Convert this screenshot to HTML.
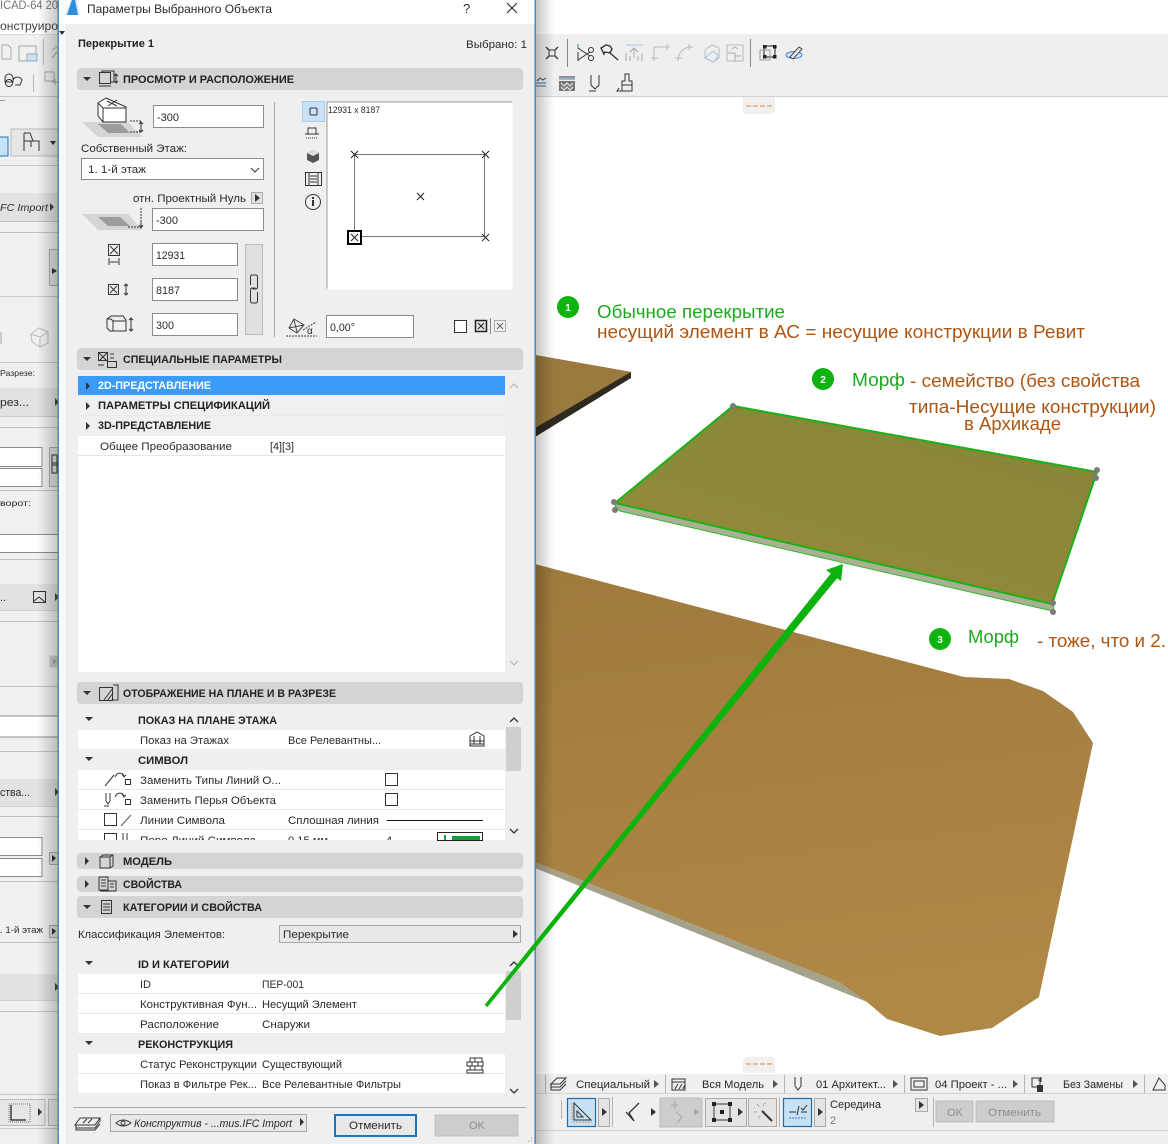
<!DOCTYPE html>
<html><head><meta charset="utf-8"><title>Параметры Выбранного Объекта</title>
<style>
html,body{margin:0;padding:0;background:#fff}
svg{display:block}
text{font-family:"Liberation Sans",sans-serif;font-size:11px;fill:#2a2a2a}
.b{font-weight:bold;fill:#222}
.w{fill:#fff;font-weight:bold}
.g{fill:#1fa81f;font-size:18px}
.o{fill:#ad5512;font-size:18px}
.i{fill:none;stroke:#333;stroke-width:1}
.l{fill:none;stroke:#9a9a9a;stroke-width:1}
.f{fill:#fff;stroke:#8c8c8c;stroke-width:1}
.tb{fill:#555;stroke:none}
</style></head><body>
<svg xmlns="http://www.w3.org/2000/svg" width="1168" height="1144" viewBox="0 0 1168 1144">
<defs>
<linearGradient id="sl" x1="0" x2="1" y1="0" y2="0"><stop offset="0" stop-color="#000" stop-opacity="0"/><stop offset="1" stop-color="#000" stop-opacity=".22"/></linearGradient>
<linearGradient id="sr" x1="0" x2="1" y1="0" y2="0"><stop offset="0" stop-color="#000" stop-opacity=".22"/><stop offset="1" stop-color="#000" stop-opacity="0"/></linearGradient>
<linearGradient id="bb" x1="0" x2="0.15" y1="0" y2="1"><stop offset="0" stop-color="#9e7a3c"/><stop offset="1" stop-color="#b08846"/></linearGradient>
<linearGradient id="pl" x1="0.9" x2="0.2" y1="0" y2="1"><stop offset="0" stop-color="#8a8238"/><stop offset="1" stop-color="#948c3a"/></linearGradient>
</defs>

<!-- viewport -->
<rect width="1168" height="1144" fill="#fff"/>
<polygon points="535,355 631,372 631,378 535,437" fill="#2e2a20"/>
<polygon points="535,355 631,372 535,428" fill="#9a7a3e"/>
<polygon points="535,862 535,868 867,1002 839,982" fill="#a5a28c"/>
<polygon points="535,564 964,677 1009,679 1043,691 1073,712 1093,743 1039,997 992,1028 940,1036 887,1019 867,1002 839,982 535,862" fill="url(#bb)"/>

<!-- morph plate -->
<polygon points="615,506 620,511 1048,610 1053,611 1054,603 616,502" fill="#a9b093" stroke="#33b833" stroke-width="1"/>
<polygon points="615,503 733,406 1097,472 1052,604" fill="url(#pl)" stroke="#19b319" stroke-width="2"/>
<path d="M622,502L737,411L1090,476" stroke="#6f9a34" stroke-width="1" fill="none"/>
<g fill="#7b7b7b"><circle cx="733" cy="406" r="3"/><circle cx="1097" cy="470" r="3"/><circle cx="1096" cy="478" r="3"/><circle cx="1053" cy="603" r="3"/><circle cx="1053" cy="612" r="3"/><circle cx="614" cy="502" r="3"/><circle cx="615" cy="510" r="3"/></g>

<!-- annotations -->
<circle cx="568" cy="307" r="11" fill="#0eb30e"/><text x="568" y="311" text-anchor="middle" style="fill:#fff;font-weight:bold;font-size:10px">1</text>
<circle cx="823" cy="379" r="11" fill="#0eb30e"/><text x="823" y="383" text-anchor="middle" style="fill:#fff;font-weight:bold;font-size:10px">2</text>
<circle cx="940" cy="639" r="11" fill="#0eb30e"/><text x="940" y="643" text-anchor="middle" style="fill:#fff;font-weight:bold;font-size:10px">3</text>
<text class="g" x="597" y="318" textLength="188" lengthAdjust="spacingAndGlyphs">Обычное перекрытие</text>
<text class="o" x="597" y="338" textLength="488" lengthAdjust="spacingAndGlyphs">несущий элемент в АС = несущие конструкции в Ревит</text>
<text class="g" x="852" y="386" textLength="53" lengthAdjust="spacingAndGlyphs">Морф</text>
<text class="o" x="910" y="387" textLength="230" lengthAdjust="spacingAndGlyphs">- семейство (без свойства</text>
<text class="o" x="909" y="413" textLength="247" lengthAdjust="spacingAndGlyphs">типа-Несущие конструкции)</text>
<text class="o" x="964" y="430" textLength="97" lengthAdjust="spacingAndGlyphs">в Архикаде</text>
<text class="g" x="968" y="643" textLength="51" lengthAdjust="spacingAndGlyphs">Морф</text>
<text class="o" x="1037" y="647" textLength="129" lengthAdjust="spacingAndGlyphs">- тоже, что и 2.</text>

<!-- top toolbar right -->
<rect x="535" y="34" width="633" height="62" fill="#efefef"/>
<rect x="535" y="96" width="633" height="1" fill="#d2d2d2"/>
<rect x="567" y="39" width="1" height="28" fill="#888"/><rect x="750" y="39" width="1" height="28" fill="#888"/>
<path d="M546,47l12,12M558,47l-12,12" stroke="#333" stroke-width="1.300" fill="none"/><rect x="549" y="50" width="6" height="6" fill="#efefef" stroke="#333"/>
<path d="M578,44v5" stroke="#3c7fc8" fill="none"/><path class="i" d="M578,52v9M578,48l12,8M578,60l12,-8"/><circle cx="591" cy="50" r="2.500" class="i"/><circle cx="591" cy="58" r="2.500" class="i"/>
<path d="M601,48l5,-3 4,1 2,3 -2,4 -5,-1 -1,2zM609,52l9,8" fill="none" stroke="#333" stroke-width="1.400"/>
<path d="M626,45h17" stroke="#a9c6e4"/><path d="M634,48v10M630,52l4,-4 4,4M630,61v-5M638,61v-5M642,61v-8M626,61v-8" fill="none" stroke="#aaa"/>
<path d="M654,61V47h13M651,58h7M667,44v6M670,47h-4" fill="none" stroke="#b8b8b8"/>
<path d="M678,61c0,-8 5,-13 12,-14M675,58h7M689,44v6M693,47h-5" fill="none" stroke="#b8b8b8"/>
<path d="M705,50l7,-5 7,3v4M705,50v8l8,4 6,-4v-6" fill="none" stroke="#bbb"/><path d="M705,58l8,-7 6,5 -6,6z" fill="none" stroke="#a8c4e4"/>
<rect x="727" y="45" width="16" height="16" fill="none" stroke="#b8b8b8"/><path d="M735,53h-8M735,53v8M732,49l3,-2 3,2M735,56h6" fill="none" stroke="#aaa"/>
<rect x="764" y="46" width="11" height="11" fill="none" stroke="#222"/><g fill="#222"><rect x="763" y="45" width="3.500" height="3.500"/><rect x="773" y="45" width="3.500" height="3.500"/><rect x="763" y="55" width="3.500" height="3.500"/><rect x="773" y="55" width="3.500" height="3.500"/></g><rect x="760" y="50" width="10" height="10" fill="none" stroke="#999"/>
<ellipse cx="794" cy="55" rx="8" ry="3.500" fill="#d0e2f4" stroke="#3c7fc8"/><path d="M790,57l9,-10 3,2 -9,10z" fill="#efefef" stroke="#444"/>
<path d="M536,83h10M536,86h10" stroke="#3c6fb0"/><path d="M537,81l3,-3 3,2 3,-2" stroke="#444" fill="none"/>
<rect x="559" y="81" width="16" height="10" fill="#777"/><path d="M559,77h16" stroke="#333"/><path d="M559,79h16" stroke="#4a78b0"/><path d="M561,83l3,3 3,-3 3,3 3,-3M561,87l3,3 3,-3 3,3 3,-3" stroke="#eee" fill="none"/>
<path class="i" d="M591,75v10l4,4 4,-4V75M589,91h7"/>
<path class="i" d="M625,74h4v7h3v4h-10v-4h3zM622,85v6h10v-6M622,91h-5l2,-3"/>
<path d="M743,97h32v13q0,4 -4,4h-24q-4,0 -4,-4z" fill="#f0f0f0"/><path d="M746,106h5M753,106h5M760,106h5M767,106h5" stroke="#e08a3c"/>
<path d="M743,1073v-12q0,-4 4,-4h24q4,0 4,4v12z" fill="#f0f0f0"/><path d="M746,1064h5M753,1064h5M760,1064h5M767,1064h5" stroke="#e08a3c"/>

<!-- bottom toolbar right -->
<rect x="535" y="1074" width="633" height="70" fill="#efefef"/>
<rect x="535" y="1093" width="633" height="1" fill="#d4d4d4"/><rect x="535" y="1130" width="633" height="1" fill="#d4d4d4"/>
<g fill="#b5b5b5"><rect x="545" y="1075" width="1" height="18"/><rect x="665" y="1075" width="1" height="18"/><rect x="784" y="1075" width="1" height="18"/><rect x="904" y="1075" width="1" height="18"/><rect x="1024" y="1075" width="1" height="18"/><rect x="1144" y="1075" width="1" height="18"/><rect x="612" y="1097" width="1" height="30"/><rect x="779" y="1097" width="1" height="30"/><rect x="933" y="1097" width="1" height="30"/><rect x="561" y="1100" width="1" height="19"/></g>
<text x="576" y="1088" textLength="74" lengthAdjust="spacingAndGlyphs">Специальный</text>
<text x="702" y="1088" textLength="62" lengthAdjust="spacingAndGlyphs">Вся Модель</text>
<text x="816" y="1088" textLength="70" lengthAdjust="spacingAndGlyphs">01 Архитект...</text>
<text x="935" y="1088" textLength="72" lengthAdjust="spacingAndGlyphs">04 Проект - ...</text>
<text x="1063" y="1088" textLength="60" lengthAdjust="spacingAndGlyphs">Без Замены</text>
<g class="tb"><polygon points="654,1080 659,1084 654,1088"/><polygon points="773,1080 778,1084 773,1088"/><polygon points="893,1080 898,1084 893,1088"/><polygon points="1013,1080 1018,1084 1013,1088"/><polygon points="1133,1080 1138,1084 1133,1088"/></g>
<path class="i" d="M551,1084l6,-6h9l-6,6zM551,1084v3h9l6,-6M551,1087v3h9l6,-6"/>
<rect x="672" y="1079" width="13" height="11" class="i"/><path class="i" d="M672,1082h13M675,1089l3,-5M679,1089l3,-5M683,1089l2,-4"/>
<path class="i" d="M795,1077v9l3,4 3,-4v-9"/>
<rect x="911" y="1078" width="16" height="12" class="i"/><rect x="914" y="1081" width="10" height="6" class="i"/>
<rect x="1032" y="1078" width="8" height="9" class="i"/><rect x="1037" y="1085" width="6" height="7" fill="#333"/><path class="i" d="M1041,1080h-3M1041,1077v5"/>
<path class="i" d="M1153,1090l6,-12 6,7v5z"/>

<rect x="567.500" y="1098.500" width="28" height="28" fill="#c7e1f7" stroke="#1f6fb0" stroke-width="1.200"/>
<path class="i" d="M574,1103v17h17zM577,1111v6h6z"/><path d="M573,1122h19M572,1103v19" stroke="#e08a3c" stroke-dasharray="2 1" fill="none"/>
<rect x="598.500" y="1098.500" width="11" height="28" fill="#e4e4e4" stroke="#aaa"/><polygon points="602,1108 607,1112 602,1116" fill="#333"/>
<path d="M626,1112l8,9M634,1121l-5,-8 10,-10" fill="none" stroke="#333" stroke-width="1.300"/><polygon points="651,1108 656,1112 651,1116" fill="#333"/>
<rect x="660" y="1098" width="42" height="29" fill="#cdcdcd" stroke="#bbb"/><path d="M671,1105h7M675,1101v8M676,1112l6,5 -5,6" fill="none" stroke="#a8a8a8"/><polygon points="694,1108 699,1112 694,1116" fill="#aaa"/>
<rect x="705.500" y="1098.500" width="41" height="28" fill="#e4e4e4" stroke="#aaa"/><rect x="714" y="1104" width="16" height="16" class="i"/><g fill="#222"><rect x="712" y="1102" width="4" height="4"/><rect x="728" y="1102" width="4" height="4"/><rect x="712" y="1118" width="4" height="4"/><rect x="728" y="1118" width="4" height="4"/></g><rect x="720" y="1110" width="4" height="4" fill="#222"/><polygon points="738,1108 743,1112 738,1116" fill="#333"/>
<rect x="748.500" y="1098.500" width="28" height="28" fill="#e4e4e4" stroke="#aaa"/><path d="M762,1111l10,10" stroke="#333" stroke-width="2"/><path d="M757,1104l3,3M765,1103l-2,3M754,1112h4M764,1112h2M758,1118l3,-3" stroke="#777" stroke-dasharray="1 1"/>
<rect x="783.500" y="1098.500" width="28" height="28" fill="#c7e1f7" stroke="#1f6fb0" stroke-width="1.200"/>
<path class="i" d="M789,1112h7M801,1112h6M799,1106l-2,9M801,1108l2,2 4,-5"/><path d="M789,1118h18" stroke="#3c7fc8" stroke-dasharray="2 1"/>
<rect x="814.500" y="1098.500" width="11" height="28" fill="#e4e4e4" stroke="#aaa"/><polygon points="818,1108 823,1112 818,1116" fill="#333"/>
<text x="830" y="1108" textLength="51" lengthAdjust="spacingAndGlyphs">Середина</text><text x="830" y="1124" style="fill:#777">2</text>
<rect x="915.500" y="1098.500" width="12" height="13" fill="#e4e4e4" stroke="#aaa"/><polygon points="919,1101 924,1105 919,1109" fill="#333"/>
<rect x="936" y="1101" width="37" height="21" fill="#cdcdcd" stroke="#bdbdbd"/><text x="947" y="1116" style="fill:#8e8e8e">OK</text>
<rect x="976" y="1101" width="78" height="21" fill="#cdcdcd" stroke="#bdbdbd"/><text x="988" y="1116" textLength="53" lengthAdjust="spacingAndGlyphs" style="fill:#8e8e8e">Отменить</text>

<!-- left panel behind dialog -->
<rect x="0" y="34" width="58" height="1110" fill="#f0f0f0"/>
<rect x="0" y="0" width="58" height="35" fill="#fff"/>
<text x="0" y="9" style="fill:#777;font-size:12px" textLength="58" lengthAdjust="spacingAndGlyphs">ICAD-64 20</text>
<text x="0" y="30" style="fill:#444;font-size:12px" textLength="58" lengthAdjust="spacingAndGlyphs">онструиро</text>
<rect x="0" y="34" width="58" height="1" fill="#ddd"/><rect x="43" y="39" width="1" height="26" fill="#bbb"/><rect x="33" y="74" width="1" height="18" fill="#bbb"/>
<path d="M2,45h6l3,3v11H2z" fill="none" stroke="#aaa"/><rect x="19" y="46" width="17" height="15" fill="none" stroke="#9aa"/><rect x="27" y="54" width="10" height="7" fill="#cfe0f2" stroke="#8ab"/><path d="M52,50l5,-3M52,58l5,-6" stroke="#aaa"/>
<path class="i" d="M5,78a4,4 0 0 1 8,0v4h-8zM13,80a5,5 0 0 1 9,0l-2,5h-5"/><circle cx="9" cy="83" r="3.500" class="i"/><rect x="45" y="72" width="9" height="9" fill="none" stroke="#aaa"/><path d="M52,82h6M55,79v6" stroke="#aaa"/>
<rect x="0" y="96" width="58" height="1" fill="#c8c8c8"/><rect x="0" y="100" width="5" height="1" fill="#999"/>
<rect x="-1" y="137" width="9" height="19" fill="#c7e1f7" stroke="#1f6fb0"/>
<rect x="11" y="129" width="47" height="27" fill="#e6e6e6" stroke="#bbb"/><path d="M24,133h6l3,8H39v10M24,133v18M24,141h15M31,141v6" fill="none" stroke="#333" stroke-width="1"/><polygon points="50,141 56,141 53,145" fill="#333"/>
<rect x="0" y="165" width="58" height="1" fill="#c8c8c8"/>
<rect x="0" y="193" width="58" height="28" fill="#e2e2e2"/><rect x="0" y="221" width="58" height="1" fill="#c0c0c0"/><rect x="0" y="232" width="58" height="1" fill="#c0c0c0"/>
<text x="0" y="211" style="font-style:italic;font-size:10.500px" textLength="48" lengthAdjust="spacingAndGlyphs">FC Import</text><polygon points="50,203 54,207 50,211" fill="#444"/>
<rect x="49.500" y="249.500" width="9" height="36" fill="#e0e0e0" stroke="#aaa"/><polygon points="52,268 52,274 57,271" fill="#333"/>
<rect x="0" y="296" width="58" height="1" fill="#c8c8c8"/>
<path d="M31,334l8,-6 9,4v11l-8,4 -8,-5zM31,334l9,3 8,-5M40,337v10" fill="none" stroke="#bbb"/><rect x="0" y="332" width="2" height="12" fill="#ccc"/>
<rect x="0" y="362" width="58" height="1" fill="#c8c8c8"/>
<text x="0" y="376" style="font-size:8.500px" textLength="35" lengthAdjust="spacingAndGlyphs">Разрезе:</text>
<rect x="0" y="388" width="58" height="28" fill="#e2e2e2"/><rect x="0" y="416" width="58" height="1" fill="#c8c8c8"/><rect x="0" y="427" width="58" height="1" fill="#c0c0c0"/>
<text x="0" y="406" textLength="29" lengthAdjust="spacingAndGlyphs">рез...</text><polygon points="55,398 55,406 59,402" fill="#444"/>
<rect x="-1" y="447.500" width="43" height="19" class="f"/><rect x="-1" y="468.500" width="43" height="18" class="f"/>
<rect x="49.500" y="447.500" width="9" height="39" fill="#e0e0e0" stroke="#aaa"/><rect x="52" y="455" width="5" height="10" class="i"/><rect x="52" y="463" width="5" height="10" class="i"/>
<rect x="0" y="490" width="58" height="1" fill="#c0c0c0"/>
<text x="0" y="506" style="font-size:8.500px" textLength="31" lengthAdjust="spacingAndGlyphs">ворот:</text>
<rect x="-1" y="534.500" width="60" height="18" class="f"/><rect x="0" y="559" width="58" height="1" fill="#c0c0c0"/>
<rect x="0" y="584" width="58" height="26" fill="#e2e2e2"/><rect x="0" y="610" width="58" height="1" fill="#d0d0d0"/><rect x="0" y="621" width="58" height="1" fill="#c0c0c0"/>
<text x="0" y="601">..</text><rect x="33.500" y="591.500" width="12" height="11" class="i"/><path class="i" d="M34,601l5,-4 6,5"/><polygon points="55,593 55,601 59,597" fill="#444"/>
<rect x="49.500" y="655.500" width="9" height="12" fill="#ccc"/><polygon points="53,658 53,665 57,661" fill="#aaa"/>
<rect x="0" y="686" width="58" height="1" fill="#c0c0c0"/>
<rect x="-1" y="716" width="60" height="21" class="f"/><rect x="0" y="751" width="58" height="1" fill="#c0c0c0"/>
<rect x="0" y="779" width="58" height="27" fill="#e2e2e2"/><rect x="0" y="806" width="58" height="1" fill="#d0d0d0"/><rect x="0" y="816" width="58" height="1" fill="#c0c0c0"/>
<text x="0" y="796" textLength="30" lengthAdjust="spacingAndGlyphs">ства...</text><polygon points="55,788 55,796 59,792" fill="#444"/>
<rect x="-1" y="837.500" width="43" height="18" class="f"/><rect x="-1" y="858.500" width="43" height="18" class="f"/>
<rect x="49.500" y="852.500" width="9" height="12" fill="#e0e0e0" stroke="#aaa"/><polygon points="52,855 52,862 56,858" fill="#333"/>
<rect x="0" y="881" width="58" height="1" fill="#c0c0c0"/>
<text x="0" y="933" style="font-size:9px" textLength="43" lengthAdjust="spacingAndGlyphs">. 1-й этаж</text>
<rect x="49.500" y="925.500" width="9" height="12" fill="#e0e0e0" stroke="#aaa"/><polygon points="52,928 52,935 56,931" fill="#333"/>
<rect x="0" y="942" width="58" height="1" fill="#c0c0c0"/>
<rect x="0" y="974" width="58" height="26" fill="#e2e2e2"/><rect x="0" y="1000" width="58" height="1" fill="#d0d0d0"/><rect x="0" y="1011" width="58" height="1" fill="#c0c0c0"/>
<polygon points="55,983 55,991 59,987" fill="#444"/>
<rect x="0" y="1094" width="58" height="1" fill="#c8c8c8"/>
<rect x="-1" y="1099.500" width="46" height="26" fill="#e6e6e6" stroke="#bbb"/><rect x="48.500" y="1099.500" width="11" height="26" fill="#e6e6e6" stroke="#bbb"/>
<rect x="9" y="1104" width="21" height="18" fill="none" stroke="#777" stroke-dasharray="1 1"/><path d="M11,1105v15h15" fill="none" stroke="#222" stroke-width="1.300"/><polygon points="38,1108 38,1116 42,1112" fill="#333"/>
<rect x="0" y="1128" width="58" height="1" fill="#c8c8c8"/>

<!-- dialog shadows -->
<rect x="38" y="0" width="20" height="1144" fill="url(#sl)"/>
<rect x="536" y="0" width="18" height="1144" fill="url(#sr)"/>

<!-- dialog -->
<rect x="58" y="0" width="478" height="1144" fill="#efefef"/>
<rect x="58" y="0" width="478" height="24" fill="#fff"/>
<rect x="58.500" y="24" width="7" height="1120" fill="#f8fbfd"/>
<rect x="57.500" y="0" width="1.500" height="1144" fill="#4a8ac0"/>
<rect x="534.500" y="0" width="1.500" height="1144" fill="#4a8ac0"/>
<polygon points="65,15 71,0 77,0 80,15" fill="#d9e8f5"/><polygon points="67,15 72,0 75,0 78,15" fill="#2f8de0"/>
<text x="87" y="13" style="font-size:12px" textLength="185" lengthAdjust="spacingAndGlyphs">Параметры Выбранного Объекта</text>
<text x="463" y="13" style="font-size:13px">?</text>
<path d="M507,3l10,10M517,3l-10,10" stroke="#222" fill="none"/>
<polygon points="59,31 65,31 62,35" fill="#333"/>
<text class="b" x="78" y="47" textLength="76" lengthAdjust="spacingAndGlyphs">Перекрытие 1</text>
<text x="466" y="48" textLength="61" lengthAdjust="spacingAndGlyphs">Выбрано: 1</text>

<!-- section headers -->
<g fill="#d4d4d4"><rect x="77" y="68" width="446" height="22" rx="4"/><rect x="77" y="348" width="446" height="22" rx="4"/><rect x="77" y="682" width="446" height="22" rx="4"/><rect x="77" y="853" width="446" height="16" rx="4"/><rect x="77" y="876" width="446" height="16" rx="4"/><rect x="77" y="896" width="446" height="22" rx="4"/></g>
<g fill="#333"><polygon points="83,77 91,77 87,81"/><polygon points="83,357 91,357 87,361"/><polygon points="83,691 91,691 87,695"/><polygon points="85,857 85,865 89,861"/><polygon points="85,880 85,888 89,884"/><polygon points="83,905 91,905 87,909"/></g>
<text class="b" x="123" y="83" textLength="171" lengthAdjust="spacingAndGlyphs">ПРОСМОТР И РАСПОЛОЖЕНИЕ</text>
<text class="b" x="123" y="363" textLength="159" lengthAdjust="spacingAndGlyphs">СПЕЦИАЛЬНЫЕ ПАРАМЕТРЫ</text>
<text class="b" x="123" y="697" textLength="213" lengthAdjust="spacingAndGlyphs">ОТОБРАЖЕНИЕ НА ПЛАНЕ И В РАЗРЕЗЕ</text>
<text class="b" x="123" y="865" textLength="49" lengthAdjust="spacingAndGlyphs">МОДЕЛЬ</text>
<text class="b" x="123" y="888" textLength="59" lengthAdjust="spacingAndGlyphs">СВОЙСТВА</text>
<text class="b" x="123" y="911" textLength="139" lengthAdjust="spacingAndGlyphs">КАТЕГОРИИ И СВОЙСТВА</text>
<rect x="99.500" y="72.500" width="11" height="11" class="i"/><path class="i" d="M102,72v-1h12v11h-3M99,86h12M116,74v9M114,76l2,-2 2,2M114,81l2,2 2,-2"/>
<rect x="98.500" y="352.500" width="9" height="8" class="i"/><path class="i" d="M99,353l8,8M107,353l-8,8M110,354h4M110,358h4M98,365h6"/><rect x="107.500" y="361.500" width="9" height="6" class="i"/>
<rect x="99.500" y="687.500" width="13" height="13" class="i"/><path class="i" d="M104,700l9,-12M108,700l5,-7M113,685h5v15h-5"/>
<path class="i" d="M100,857l3,-2h10v11l-3,2H100zM100,857h10v11M110,857l3,-2"/>
<rect x="99" y="877" width="9" height="13" class="i"/><path class="i" d="M108,881h8v10h-16M101,880h5M101,883h5M101,886h5M110,884h4M110,887h4"/>
<rect x="101.500" y="900.500" width="10" height="13" class="i"/><path class="i" d="M103,904h7M103,907h7M103,910h7"/>

<!-- preview section left -->
<polygon points="82,122 128,122 143,137 98,137" fill="#d5d5d5"/><polygon points="98,124 121,124 130,133 108,133" fill="#9c9c9c"/>
<path d="M98,103l8,-5 20,9v15H103l-5,-6z" fill="#fff"/><path class="i" d="M98,103l5,5h23M103,108v14M98,103v13l5,6h23v-15l-20,-9zM107,101l10,5M117,100l-9,6"/>
<path d="M130,121h11M130,132h11" stroke="#333" stroke-dasharray="2 1" fill="none"/><path d="M141,122v10M139,124l2,-2 2,2M139,130l2,2 2,-2" class="i"/>
<rect x="153.500" y="105.500" width="110" height="22" class="f"/><text x="157" y="121" textLength="22" lengthAdjust="spacingAndGlyphs">-300</text>
<text x="81" y="152" textLength="106" lengthAdjust="spacingAndGlyphs">Собственный Этаж:</text>
<rect x="81.500" y="158.500" width="182" height="21" class="f"/><text x="88" y="173" textLength="58" lengthAdjust="spacingAndGlyphs">1. 1-й этаж</text><path class="i" d="M251,168l4,4 4,-4"/>
<text x="133" y="202" textLength="113" lengthAdjust="spacingAndGlyphs">отн. Проектный Нуль</text>
<rect x="251.500" y="192.500" width="11" height="11" fill="#e2e2e2" stroke="#aaa"/><polygon points="255,194 255,202 260,198" fill="#333"/>
<polygon points="82,214 128,214 142,230 98,230" fill="#d5d5d5"/><polygon points="98,217 120,217 130,226 108,226" fill="#9c9c9c"/>
<path d="M141,208v14" stroke="#333" stroke-dasharray="2 1"/><path class="i" d="M141,220v8M139,225l2,3 2,-3"/><path d="M128,227h13" stroke="#333" stroke-dasharray="2 1"/>
<rect x="152.500" y="208.500" width="111" height="22" class="f"/><text x="156" y="224" textLength="22" lengthAdjust="spacingAndGlyphs">-300</text>
<rect x="108.500" y="244.500" width="11" height="11" class="i"/><path class="i" d="M110,246l8,8M118,246l-8,8M109,258v7M119,258v7M110,262h8"/>
<rect x="152.500" y="243.500" width="85" height="22" class="f"/><text x="156" y="259" textLength="29" lengthAdjust="spacingAndGlyphs">12931</text>
<rect x="108.500" y="284.500" width="10" height="10" class="i"/><path class="i" d="M110,286l7,7M117,286l-7,7M126,284v11M124,286l2,-2 2,2M124,293l2,2 2,-2"/>
<rect x="152.500" y="278.500" width="85" height="22" class="f"/><text x="156" y="294" textLength="24" lengthAdjust="spacingAndGlyphs">8187</text>
<path class="i" d="M107,319l4,-3h12l3,4v11h-16l-3,-3zM107,319h4l2,2h13M113,321v10M131,318v13M129,320l2,-2 2,2M129,329l2,2 2,-2"/>
<rect x="152.500" y="313.500" width="85" height="22" class="f"/><text x="156" y="329" textLength="18" lengthAdjust="spacingAndGlyphs">300</text>
<rect x="245.500" y="244.500" width="17" height="90" fill="#e0e0e0" stroke="#bbb"/>
<path class="i" d="M250.500,285v-8q0,-2 2,-2h3q2,0 2,2v10q0,2 -2,2h-3M257.500,292v9q0,2 -2,2h-3q-2,0 -2,-2v-11q0,-2 2,-2h3"/>
<rect x="274" y="102" width="1" height="235" fill="#aaa"/>
<rect x="302.500" y="101.500" width="22" height="20" fill="#c9e1f6" stroke="#a8cbe8"/><rect x="310" y="108" width="7" height="7" rx="1" class="i"/>
<path class="i" d="M308,134v-6h8v6M305,134h14" /><path d="M306,138h12" stroke="#333" stroke-dasharray="1 1"/>
<polygon points="313,150 319,153 319,160 313,163 307,160 307,153" fill="#555"/><polygon points="313,150 319,153 313,156 307,153" fill="#ddd"/>
<rect x="305.500" y="172.500" width="16" height="13" class="i"/><path class="i" d="M309,172v13M318,172v13M310,176h7M310,179h7M310,182h7"/>
<circle cx="313" cy="202" r="7.500" class="i"/><rect x="312" y="200" width="2" height="6" fill="#333"/><rect x="312" y="197" width="2" height="2" fill="#333"/>
<rect x="327" y="102" width="185" height="187" fill="#fff" stroke="#999"/><path d="M327,289h185V102" stroke="#fff" fill="none"/>
<text x="328" y="113" style="font-size:9px" textLength="52" lengthAdjust="spacingAndGlyphs">12931 x 8187</text>
<rect x="354.500" y="154.500" width="130" height="82" fill="none" stroke="#777"/>
<g stroke="#222" fill="none"><path d="M351,151l7,7M358,151l-7,7M482,151l7,7M489,151l-7,7M482,234l7,7M489,234l-7,7M417,193l7,7M424,193l-7,7"/></g>
<rect x="348" y="231" width="13" height="13" fill="#fff" stroke="#000" stroke-width="2"/><path d="M351,234l7,7M358,234l-7,7" stroke="#222"/>
<path d="M294,319l10,6 -7,8 -8,-5zM294,320l3,12M304,325l-15,3" fill="none" stroke="#444"/><path d="M286,336h31M303,330l13,-8" stroke="#444" stroke-dasharray="2 1" fill="none"/><text x="307" y="334" style="font-size:10px">α</text>
<rect x="326.500" y="315.500" width="87" height="22" class="f"/><text x="330" y="331" textLength="25" lengthAdjust="spacingAndGlyphs">0,00°</text>
<rect x="454.500" y="320.500" width="12" height="12" class="f" style="stroke:#333"/>
<rect x="475.500" y="320.500" width="11" height="11" fill="#e2e2e2" stroke="#222" stroke-width="1.500"/><path d="M478,323l6,6M484,323l-6,6" stroke="#222"/>
<rect x="490" y="318" width="1" height="16" fill="#888"/>
<rect x="494.500" y="320.500" width="11" height="11" fill="none" stroke="#666" stroke-dasharray="1 1"/><path d="M497,323l6,6M503,323l-6,6" stroke="#666"/>

<!-- special params list -->
<rect x="78" y="376" width="427" height="296" fill="#fff"/>
<rect x="78" y="376" width="427" height="19" fill="#3b9bf8"/>
<rect x="78" y="395" width="427" height="41" fill="#f0f0f0"/><rect x="78" y="415" width="427" height="1" fill="#eaeaea"/>
<rect x="78" y="455" width="427" height="1" fill="#e6e6e6"/>
<g fill="#333"><polygon points="86,382 86,390 90,386"/><polygon points="86,402 86,410 90,406"/><polygon points="86,422 86,430 90,426"/></g>
<text class="w" x="98" y="389" textLength="113" lengthAdjust="spacingAndGlyphs">2D-ПРЕДСТАВЛЕНИЕ</text>
<text class="b" x="98" y="409" textLength="172" lengthAdjust="spacingAndGlyphs">ПАРАМЕТРЫ СПЕЦИФИКАЦИЙ</text>
<text class="b" x="98" y="429" textLength="113" lengthAdjust="spacingAndGlyphs">3D-ПРЕДСТАВЛЕНИЕ</text>
<text x="100" y="450" textLength="132" lengthAdjust="spacingAndGlyphs">Общее Преобразование</text>
<text x="270" y="450" textLength="24" lengthAdjust="spacingAndGlyphs">[4][3]</text>
<path d="M510,388l4,-4 4,4M510,661l4,4 4,-4" stroke="#bbb" stroke-width="1.300" fill="none"/>

<!-- display list -->
<rect x="78" y="710" width="427" height="130" fill="#fff"/>
<rect x="78" y="710" width="427" height="20" fill="#efefef"/><rect x="78" y="749" width="427" height="21" fill="#efefef"/>
<rect x="78" y="789" width="427" height="1" fill="#e6e6e6"/><rect x="78" y="809" width="427" height="1" fill="#e6e6e6"/><rect x="78" y="829" width="427" height="1" fill="#e6e6e6"/>
<rect x="506" y="727" width="15" height="44" fill="#cfcfcf"/>
<path d="M510,722l4,-4 4,4M510,829l4,4 4,-4" stroke="#333" stroke-width="1.300" fill="none"/>
<g fill="#333"><polygon points="85,717 93,717 89,721"/><polygon points="85,757 93,757 89,761"/></g>
<text class="b" x="138" y="724" textLength="139" lengthAdjust="spacingAndGlyphs">ПОКАЗ НА ПЛАНЕ ЭТАЖА</text>
<text x="140" y="744" textLength="89" lengthAdjust="spacingAndGlyphs">Показ на Этажах</text>
<text x="288" y="744" textLength="93" lengthAdjust="spacingAndGlyphs">Все Релевантны...</text>
<path class="i" d="M470,736l7,-4 7,4v10h-14zM470,741h14M470,744h14M474,736v8M480,736v8"/>
<text class="b" x="138" y="764" textLength="50" lengthAdjust="spacingAndGlyphs">СИМВОЛ</text>
<path class="i" d="M105,786l9,-11M115,777c2,-5 7,-5 9,-1"/><rect x="125.500" y="779.500" width="5" height="5" class="i"/><path class="i" d="M122,774l2,3 2,-2"/>
<text x="140" y="784" textLength="141" lengthAdjust="spacingAndGlyphs">Заменить Типы Линий О...</text>
<rect x="385.500" y="773.500" width="12" height="12" class="f" style="stroke:#333"/>
<path class="i" d="M106,793v8l2,3 2,-3v-8M104,806h5M115,797c2,-5 7,-5 9,-1M122,794l2,3 2,-2"/><rect x="125.500" y="799.500" width="5" height="5" class="i"/>
<text x="140" y="804" textLength="136" lengthAdjust="spacingAndGlyphs">Заменить Перья Объекта</text>
<rect x="385.500" y="793.500" width="12" height="12" class="f" style="stroke:#333"/>
<rect x="104.500" y="813.500" width="12" height="12" class="f" style="stroke:#333"/><path d="M121,826l10,-11" stroke="#555"/>
<text x="140" y="824" textLength="85" lengthAdjust="spacingAndGlyphs">Линии Символа</text>
<text x="288" y="824" textLength="91" lengthAdjust="spacingAndGlyphs">Сплошная линия</text>
<rect x="387" y="820" width="96" height="1" fill="#111"/>
<rect x="437.500" y="832.500" width="45" height="8" fill="#fff" stroke="#222"/><rect x="452" y="836" width="28" height="4" fill="#12a03c"/><rect x="444" y="835" width="2" height="5" fill="#12a03c"/>
<svg x="78" y="830" width="427" height="10" viewBox="78 830 427 10"><rect x="104.500" y="833.500" width="12" height="12" class="f" style="stroke:#333"/><path d="M123,833v10M127,833v10" stroke="#333"/><text x="140" y="844" textLength="116" lengthAdjust="spacingAndGlyphs">Перо Линий Символа</text><text x="288" y="844" textLength="40" lengthAdjust="spacingAndGlyphs">0,15 мм</text><text x="386" y="844">4</text></svg>

<!-- categories -->
<text x="78" y="938" textLength="147" lengthAdjust="spacingAndGlyphs">Классификация Элементов:</text>
<rect x="279.500" y="925.500" width="241" height="17" fill="#e8e8e8" stroke="#a8a8a8"/><text x="283" y="938" textLength="66" lengthAdjust="spacingAndGlyphs">Перекрытие</text><polygon points="513,930 513,938 518,934" fill="#333"/>
<rect x="78" y="954" width="427" height="140" fill="#fff"/>
<rect x="78" y="954" width="427" height="20" fill="#efefef"/><rect x="78" y="1033" width="427" height="21" fill="#efefef"/>
<rect x="78" y="993" width="427" height="1" fill="#e6e6e6"/><rect x="78" y="1013" width="427" height="1" fill="#e6e6e6"/><rect x="78" y="1073" width="427" height="1" fill="#e6e6e6"/><rect x="78" y="1093" width="427" height="5" fill="#efefef"/>
<rect x="506" y="971" width="15" height="49" fill="#cfcfcf"/>
<path d="M510,966l4,-4 4,4M510,1089l4,4 4,-4" stroke="#333" stroke-width="1.300" fill="none"/>
<g fill="#333"><polygon points="85,961 93,961 89,965"/><polygon points="85,1041 93,1041 89,1045"/></g>
<text class="b" x="138" y="968" textLength="91" lengthAdjust="spacingAndGlyphs">ID И КАТЕГОРИИ</text>
<text x="140" y="988">ID</text><text x="262" y="988" textLength="42" lengthAdjust="spacingAndGlyphs">ПЕР-001</text>
<text x="140" y="1008" textLength="117" lengthAdjust="spacingAndGlyphs">Конструктивная Фун...</text><text x="262" y="1008" textLength="95" lengthAdjust="spacingAndGlyphs">Несущий Элемент</text>
<text x="140" y="1028" textLength="79" lengthAdjust="spacingAndGlyphs">Расположение</text><text x="262" y="1028" textLength="48" lengthAdjust="spacingAndGlyphs">Снаружи</text>
<text class="b" x="138" y="1048" textLength="95" lengthAdjust="spacingAndGlyphs">РЕКОНСТРУКЦИЯ</text>
<text x="140" y="1068" textLength="117" lengthAdjust="spacingAndGlyphs">Статус Реконструкции</text><text x="262" y="1068" textLength="80" lengthAdjust="spacingAndGlyphs">Существующий</text>
<path class="i" d="M470,1058h12v4h-12zM467,1062h16v4h-16zM470,1066h12v4h-12zM467,1070h16v3h-16zM475,1058v4M472,1062v4M478,1062v4M475,1066v4"/>
<text x="140" y="1088" textLength="117" lengthAdjust="spacingAndGlyphs">Показ в Фильтре Рек...</text><text x="262" y="1088" textLength="139" lengthAdjust="spacingAndGlyphs">Все Релевантные Фильтры</text>

<!-- dialog footer -->
<rect x="73" y="1107" width="453" height="1" fill="#aaa"/>
<path class="i" d="M80,1118h20l-5,7H75zM76,1125v3h19l5,-7v-3M76,1128v2h19l5,-6M83,1123l4,-4M88,1123l4,-4"/>
<rect x="110.500" y="1114.500" width="196" height="17" fill="#e8e8e8" stroke="#a8a8a8"/>
<path class="i" d="M116,1123q7,-6 15,0q-8,6 -15,0z"/><circle cx="123" cy="1123" r="2" class="i"/>
<text x="134" y="1127" style="font-style:italic" textLength="158" lengthAdjust="spacingAndGlyphs">Конструктив - ...mus.IFC Import</text><polygon points="300,1118 300,1126 304,1122" fill="#333"/>
<rect x="335" y="1115" width="81" height="21" fill="#e8e8e8" stroke="#1a74bd" stroke-width="2"/><text x="349" y="1129" textLength="53" lengthAdjust="spacingAndGlyphs">Отменить</text>
<rect x="435" y="1115" width="83" height="21" fill="#cdcdcd" stroke="#c0c0c0"/><text x="469" y="1129" style="fill:#8e8e8e">OK</text>
<path d="M528,1141h1M531,1141h1M531,1138h1M534,1141h1M534,1138h1M534,1135h1" stroke="#999"/>

<!-- arrow -->
<polygon points="484.500,1005 487.500,1007 838,577 832,572" fill="#0cb30c"/>
<polygon points="843,564 826,570 841,581" fill="#0cb30c"/>
</svg>
</body></html>
